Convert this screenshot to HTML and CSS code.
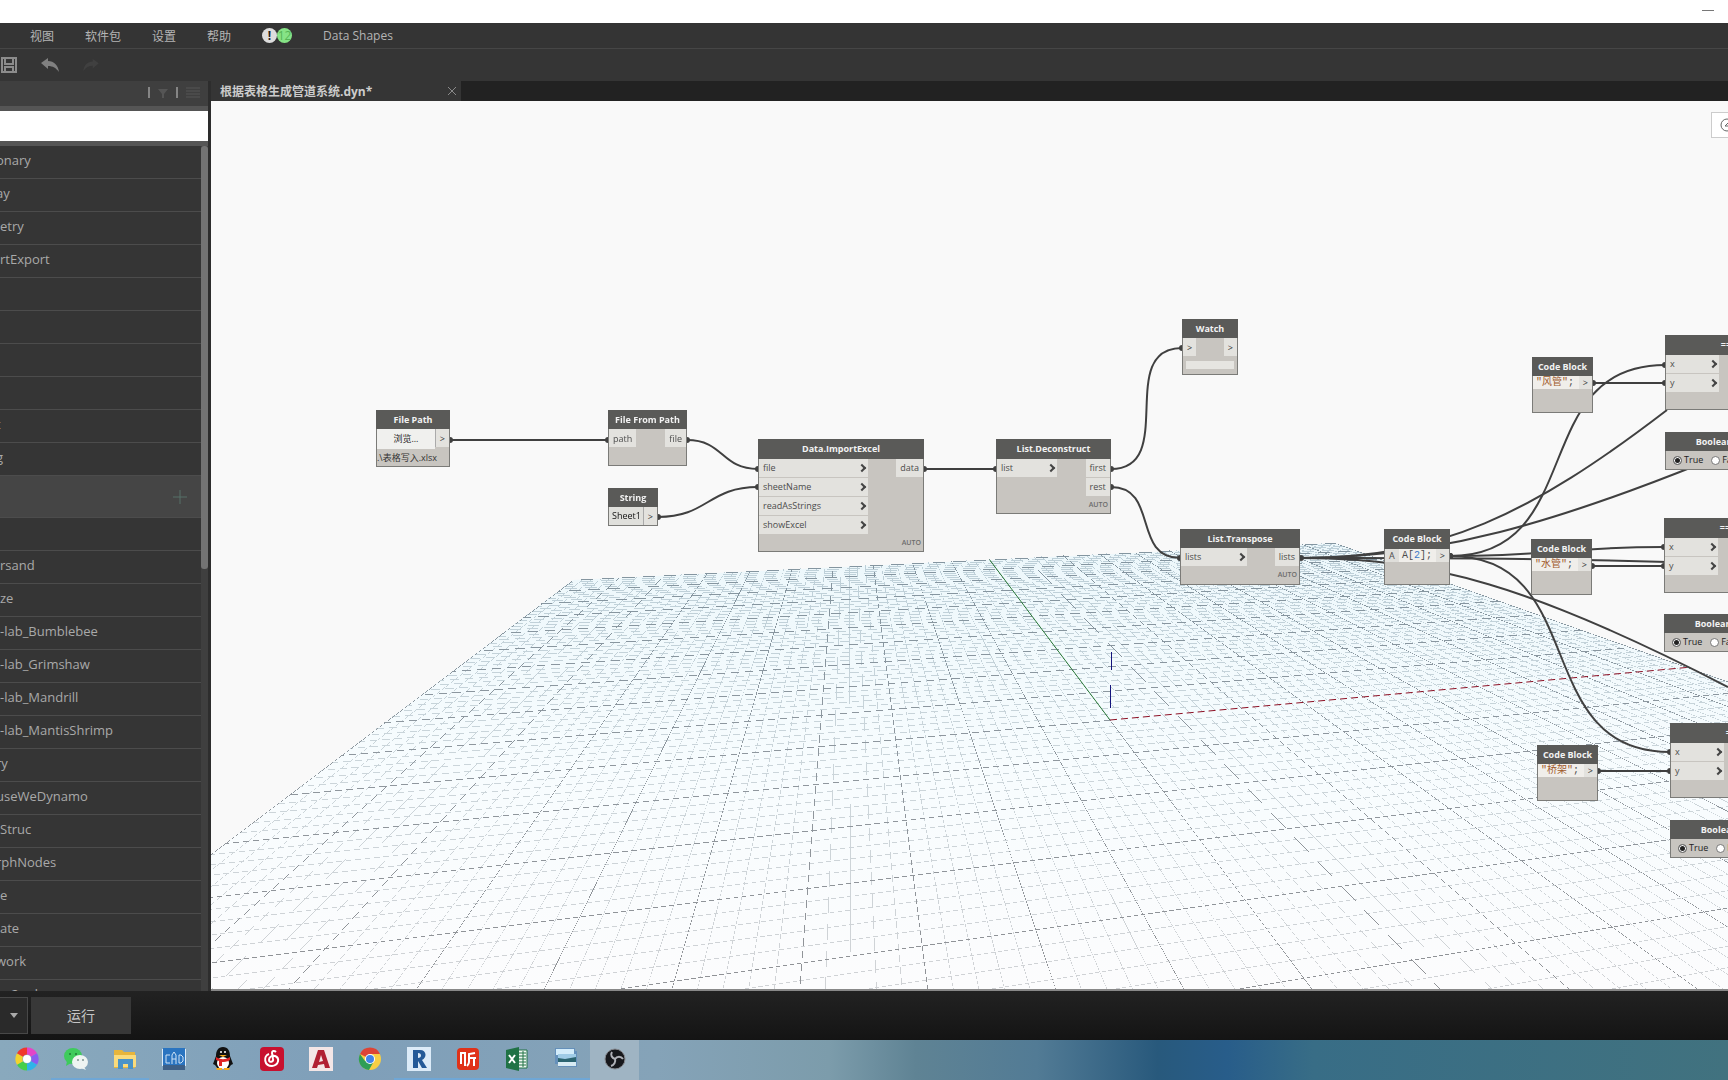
FILE: index.html
```html
<!DOCTYPE html>
<html lang="zh-CN">
<head>
    <meta charset="utf-8">
    <meta name="viewport" content="width=device-width, initial-scale=1.0">
    <title>Dynamo</title>
    <link rel="stylesheet" href="styles.css">
</head>
<body>
    <header class="titlebar">
        <button type="button" class="minimize" aria-label="最小化"></button>
    </header>

    <nav class="menubar">
        <a href="#">视图</a>
        <a href="#">软件包</a>
        <a href="#">设置</a>
        <a href="#">帮助</a>
        <span class="badges"><span class="badge warn">!</span><span class="badge count">12</span></span>
        <a href="#">Data Shapes</a>
    </nav>

    <div class="toolbar">
        <button type="button" class="tool" aria-label="保存">
            <svg width="16" height="16" viewBox="0 0 16 16"><path d="M1 1h14v14H1zM4 1v6h8V1M4 15v-5h8v5" fill="none" stroke="#8c8c8c" stroke-width="2"/></svg>
        </button>
        <button type="button" class="tool" aria-label="撤销">
            <svg width="18" height="14" viewBox="0 0 18 14"><path d="M0 5L7 0v3c6 0 10 4 11 11-3-4-6-6-11-6v3z" fill="#808080"/></svg>
        </button>
        <button type="button" class="tool" aria-label="重做">
            <svg width="16" height="12" viewBox="0 0 18 14"><path d="M18 5L11 0v3C5 3 1 7 0 14c3-4 6-6 11-6v3z" fill="#404040"/></svg>
        </button>
    </div>

    <div class="main">
        <aside class="library">
            <div class="library-head">
                <span class="bar"></span>
                <svg width="10" height="12" viewBox="0 0 10 12"><path d="M0 2h10L6 7v4H4V7z" fill="#555"/></svg>
                <span class="bar"></span>
                <svg width="14" height="12" viewBox="0 0 14 12"><path d="M0 1h14M0 4h14M0 7h14M0 10h14" stroke="#565656"/></svg>
            </div>
            <div class="search"><input type="text" aria-label="搜索"></div>
            <div class="library-body">
                <ul>
                    <li class="cut">onary</li>
                    <li class="cut">ay</li>
                    <li>etry</li>
                    <li>rtExport</li>
                    <li></li>
                    <li></li>
                    <li></li>
                    <li></li>
                    <li class="cut">t</li>
                    <li class="cut">g</li>
                    <li class="addons"><button type="button" aria-label="添加"><svg width="14" height="14" viewBox="0 0 14 14"><path d="M7 0v14M0 7h14" stroke="#567068"/></svg></button></li>
                    <li></li>
                    <li>rsand</li>
                    <li>ze</li>
                    <li>-lab_Bumblebee</li>
                    <li>-lab_Grimshaw</li>
                    <li>-lab_Mandrill</li>
                    <li>-lab_MantisShrimp</li>
                    <li class="cut">ry</li>
                    <li class="cut">useWeDynamo</li>
                    <li>Struc</li>
                    <li class="cut">rphNodes</li>
                    <li>e</li>
                    <li>ate</li>
                    <li class="cut">work</li>
                    <li>n 2 od</li>
                </ul>
                <div class="scroll"><div class="thumb"></div></div>
            </div>
        </aside>

        <section class="editor">
            <div class="tabs">
                <div class="tab">
                    <span>根据表格生成管道系统.dyn*</span>
                    <button type="button" aria-label="关闭"><svg width="8" height="8" viewBox="0 0 8 8"><path d="M0 0l8 8M8 0L0 8" stroke="#8a8a8a"/></svg></button>
                </div>
            </div>
            <div class="workspace" id="workspace">
                <canvas id="grid"></canvas>
                <svg class="wires">
                    <g id="wires"></g>
                </svg>

                <div class="node file-path">
                    <h3>File Path</h3>
                    <div class="row"><button type="button" class="browse">浏览...</button><span class="port out">&gt;</span></div>
                    <div class="path">.\表格写入.xlsx</div>
                </div>

                <div class="node from-path">
                    <h3>File From Path</h3>
                    <div class="row"><span class="port">path</span><span class="port">file</span></div>
                </div>

                <div class="node string">
                    <h3>String</h3>
                    <div class="row"><input type="text" value="Sheet1" aria-label="String"><span class="port out">&gt;</span></div>
                </div>

                <div class="node import-excel">
                    <h3>Data.ImportExcel</h3>
                    <div class="ports">
                        <div class="ins">
                            <span class="port list">file</span>
                            <span class="port list">sheetName</span>
                            <span class="port list">readAsStrings</span>
                            <span class="port list">showExcel</span>
                        </div>
                        <div class="outs"><span class="port">data</span></div>
                    </div>
                    <small>AUTO</small>
                </div>

                <div class="node deconstruct">
                    <h3>List.Deconstruct</h3>
                    <div class="ports">
                        <div class="ins"><span class="port list">list</span></div>
                        <div class="outs"><span class="port">first</span><span class="port">rest</span></div>
                    </div>
                    <small>AUTO</small>
                </div>

                <div class="node watch">
                    <h3>Watch</h3>
                    <div class="row"><span class="port out">&gt;</span><span class="port out">&gt;</span></div>
                    <div class="preview"></div>
                </div>

                <div class="node transpose">
                    <h3>List.Transpose</h3>
                    <div class="ports">
                        <div class="ins"><span class="port list">lists</span></div>
                        <div class="outs"><span class="port">lists</span></div>
                    </div>
                    <small>AUTO</small>
                </div>

                <div class="node code code-a">
                    <h3>Code Block</h3>
                    <div class="row"><span class="var">A</span><code>A[<i>2</i>];</code><span class="port out">&gt;</span></div>
                </div>
                <div class="node code code-duct">
                    <h3>Code Block</h3>
                    <div class="row"><code><b>"风管"</b>;</code><span class="port out">&gt;</span></div>
                </div>
                <div class="node code code-pipe">
                    <h3>Code Block</h3>
                    <div class="row"><code><b>"水管"</b>;</code><span class="port out">&gt;</span></div>
                </div>
                <div class="node code code-tray">
                    <h3>Code Block</h3>
                    <div class="row"><code><b>"桥架"</b>;</code><span class="port out">&gt;</span></div>
                </div>

                <div class="node equal equal-duct">
                    <h3>==</h3>
                    <div class="ins"><span class="port list">x</span><span class="port list">y</span></div>
                </div>
                <div class="node equal equal-pipe">
                    <h3>==</h3>
                    <div class="ins"><span class="port list">x</span><span class="port list">y</span></div>
                </div>
                <div class="node equal equal-tray">
                    <h3>==</h3>
                    <div class="ins"><span class="port list">x</span><span class="port list">y</span></div>
                </div>

                <div class="node boolean bool-duct">
                    <h3>Boolean</h3>
                    <div class="row"><label><input type="radio" name="b1" checked>True</label><label><input type="radio" name="b1">False</label></div>
                </div>
                <div class="node boolean bool-pipe">
                    <h3>Boolean</h3>
                    <div class="row"><label><input type="radio" name="b2" checked>True</label><label><input type="radio" name="b2">False</label></div>
                </div>
                <div class="node boolean bool-tray">
                    <h3>Boolean</h3>
                    <div class="row"><label><input type="radio" name="b3" checked>True</label><label><input type="radio" name="b3">False</label></div>
                </div>

                <button type="button" class="view-toggle" aria-label="切换视图">
                    <svg width="14" height="14" viewBox="0 0 14 14"><path d="M7 1a6 6 0 1 0 0 12a6 6 0 1 0 0-12M5 8l4-4v4z" fill="none" stroke="#666"/></svg>
                </button>
            </div>
        </section>
    </div>

    <footer class="runbar">
        <button type="button" class="mode" aria-label="运行模式"><svg width="8" height="5" viewBox="0 0 8 5"><path d="M0 0h8L4 5z" fill="#aaa"/></svg></button>
        <button type="button" class="run">运行</button>
    </footer>

    <div class="taskbar">
        <a href="#" class="app" aria-label="浏览器">
            <svg viewBox="0 0 24 24"><g fill="none" stroke-width="7"><path d="M12 4a8 8 0 0 1 7 4" stroke="#e445c8"/><path d="M19 8a8 8 0 0 1 0 8" stroke="#8a5cf0"/><path d="M19 16a8 8 0 0 1-7 4" stroke="#2fb4e8"/><path d="M12 20a8 8 0 0 1-7-4" stroke="#46cf4c"/><path d="M5 16a8 8 0 0 1 0-8" stroke="#f4d32c"/><path d="M5 8a8 8 0 0 1 7-4" stroke="#f0382c"/></g><circle cx="12" cy="12" r="4" fill="#fff"/></svg>
        </a>
        <a href="#" class="app open" aria-label="微信">
            <svg viewBox="0 0 24 24"><ellipse cx="9" cy="9" rx="9" ry="8" fill="#3ecb5c"/><path d="M3 14l-1 5 5-3z" fill="#3ecb5c"/><ellipse cx="16" cy="15" rx="8" ry="7" fill="#eef4f2"/><path d="M20 20l2 3-5-2z" fill="#eef4f2"/><g fill="#1c7a35"><circle cx="6" cy="7" r="1"/><circle cx="12" cy="7" r="1"/></g><g fill="#7e9490"><circle cx="14" cy="13" r="1"/><circle cx="19" cy="13" r="1"/></g></svg>
        </a>
        <a href="#" class="app open" aria-label="资源管理器">
            <svg viewBox="0 0 24 24"><path d="M1 3h8l2 2h11v16H1z" fill="#e7b53c"/><path d="M1 8h22v12H1z" fill="#fadb7c"/><path d="M5 12h15v10h-5v-5h-5v5H5z" fill="#4a93c8"/></svg>
        </a>
        <a href="#" class="app" aria-label="CAD">
            <svg viewBox="0 0 24 24"><path d="M1 1h22v22H1z" fill="#2a74c0"/><path d="M1 18h22v5H1z" fill="#3d5f86"/><path d="M0 2h1v17H0zM23 2h1v17h-1z" fill="#dcebf8"/><path d="M8 8H4v8h4M10 17V8l2-3 2 3v9M10 12h4M17 8h2l2 2v4l-2 2h-2z" fill="none" stroke="#cfe3f6" stroke-width="1"/></svg>
        </a>
        <a href="#" class="app" aria-label="QQ">
            <svg viewBox="0 0 24 24"><path d="M12 0c5 0 7 4 7 9l3 8-2 1-3 4H7l-3-4-2-1 3-8c0-5 2-9 7-9z" fill="#111"/><ellipse cx="12" cy="16" rx="6" ry="6" fill="#fff"/><circle cx="10" cy="5" r="1" fill="#fff"/><circle cx="14" cy="5" r="1" fill="#fff"/><path d="M8 8h8l-4 2z" fill="#f5a91c"/><path d="M5 10c5 3 9 3 14 0v3c-3 2-6 2-8 2v4H8v-5l-3-1z" fill="#e02425"/><path d="M5 21h6v2H6zM13 21h6l-1 2h-5z" fill="#f5a91c"/></svg>
        </a>
        <a href="#" class="app" aria-label="网易云音乐">
            <svg viewBox="0 0 24 24"><rect width="24" height="24" rx="4" fill="#c8102e"/><path d="M16 5c-2-2-4-1-4 1l1 6c1 3-4 4-4 1s3-5 6-4c5 2 4 9-3 10-8 0-9-10-3-12" fill="none" stroke="#fff" stroke-width="2"/></svg>
        </a>
        <a href="#" class="app" aria-label="AutoCAD">
            <svg viewBox="0 0 24 24"><path d="M0 0h24v24H0z" fill="#f3e6e6"/><path d="M3 21L9 3h6l6 18h-5l-1-4-6 1-1 3zM12 8l-2 7 4-1z" fill="#b02032" fill-rule="evenodd"/></svg>
        </a>
        <a href="#" class="app" aria-label="Chrome">
            <svg viewBox="0 0 24 24"><circle cx="12" cy="12" r="11" fill="#f7cf45"/><path d="M12 12L2 7A11 11 0 0 1 22 7H12z" fill="#dc4437"/><path d="M2 7a11 11 0 0 0 9 16l5-9-9 0z" fill="#2f9e56"/><circle cx="12" cy="12" r="5" fill="#fff"/><circle cx="12" cy="12" r="4" fill="#4384e8"/></svg>
        </a>
        <a href="#" class="app open" aria-label="Revit">
            <svg viewBox="0 0 24 24"><path d="M0 0h24v24H0z" fill="#dcebf8"/><path d="M6 3h7c7 0 7 8 2 10l5 8h-5l-4-7v7H6zm5 3v5c4 0 4-5 0-5z" fill="#245a98" fill-rule="evenodd"/></svg>
        </a>
        <a href="#" class="app open" aria-label="听">
            <svg viewBox="0 0 24 24"><rect x="1" y="1" width="22" height="22" rx="4" fill="#e03219"/><path d="M5 17V6h4v13M19 6l-6 1v8q0 2-2 4M13 11h7M18 11v8" fill="none" stroke="#fff" stroke-width="2"/></svg>
        </a>
        <a href="#" class="app open" aria-label="Excel">
            <svg viewBox="0 0 24 24"><path d="M12 3h10v18H12z" fill="#f2f8f4" stroke="#207245"/><path d="M14 6h7M14 9h7M14 12h7M14 15h7M14 18h7M18 4v16" stroke="#207245"/><path d="M1 3l13-3v24L1 21z" fill="#207245"/><path d="M4 8l6 8M10 8l-6 8" stroke="#fff" stroke-width="2"/></svg>
        </a>
        <a href="#" class="app open" aria-label="照片">
            <svg viewBox="0 0 24 24"><path d="M1 1h20v16H1zM4 4h19v16H4z" fill="#6590ba"/><path d="M2 2h18v6H2z" fill="#d3ecfa"/><path d="M4 7h18v12H4z" fill="#9fcbe6"/><path d="M4 11l7 1 11-2v5H4z" fill="#2c6470"/><path d="M4 15h18v4H4z" fill="#d8ebf3"/></svg>
        </a>
        <a href="#" class="app active" aria-label="OBS">
            <svg viewBox="0 0 24 24"><circle cx="12" cy="12" r="10" fill="#17181c" stroke="#85888e"/><g fill="none" stroke="#b0b2b8" stroke-width="2"><path d="M12 12c-3-1-5-4-3-7"/><path d="M12 12c2-3 6-3 8 0"/><path d="M12 12c1 3-1 6-4 7"/></g></svg>
        </a>
    </div>

    <script src="main.js"></script>
</body>
</html>
```
FILE: styles.css
```css
* { box-sizing: border-box; }

html, body { height: 100%; }

body {
    margin: 0;
    display: flex;
    flex-direction: column;
    overflow: hidden;
    background: #353535;
    color: #b4b4b4;
    font-family: "Open Sans", "Noto Sans CJK SC", sans-serif;
    font-size: 12px;
}

a { color: inherit; text-decoration: none; }

button {
    padding: 0;
    border: 0;
    background: none;
    color: inherit;
    font: inherit;
}

svg { display: block; }

/* top bars */
.titlebar {
    display: flex;
    flex: none;
    justify-content: flex-end;
    height: 23px;
    padding: 10px 14px 0 0;
    background: #fff;
}
.minimize { width: 12px; height: 1px; background: #777; }

.menubar {
    display: flex;
    flex: none;
    align-items: center;
    gap: 31px;
    height: 26px;
    padding-left: 30px;
    border-bottom: 1px solid #464646;
    background: #343434;
}
.badges { display: flex; }
.badge {
    width: 15px;
    height: 15px;
    border-radius: 50%;
    line-height: 15px;
    text-align: center;
}
.warn { background: #ddd; color: #222; font-weight: bold; }
.count { background: #86e386; color: #55b455; }

.toolbar {
    display: flex;
    flex: none;
    align-items: center;
    gap: 24px;
    height: 32px;
    padding-left: 1px;
    background: #353535;
}

.main { display: flex; flex: 1; min-height: 0; }

/* library */
.library {
    display: flex;
    flex-direction: column;
    flex: none;
    width: 211px;
    border-right: 3px solid #2d2d2d;
}
.library-head {
    display: flex;
    flex: none;
    align-items: center;
    justify-content: flex-end;
    gap: 8px;
    height: 25px;
    padding: 0 8px 2px 0;
    background: #3f3f3f;
}
.bar { width: 2px; height: 11px; background: #858585; }
.search { flex: none; border: solid #555; border-width: 5px 0; }
.search input {
    display: block;
    width: 100%;
    height: 30px;
    border: 0;
    background: #fff;
}
.library-body { display: flex; flex: 1; min-height: 0; overflow: hidden; }
.library ul {
    flex: 1;
    margin: 0;
    padding: 0;
    list-style: none;
    font-size: 13px;
    color: #a9a9a9;
}
.library li {
    height: 33px;
    border-bottom: 1px solid #4c4c4c;
    line-height: 28px;
    white-space: pre;
}
/* names that run off the left side */
.library .cut { text-indent: -4px; }
.library .addons {
    display: flex;
    align-items: center;
    justify-content: flex-end;
    height: 42px;
    padding-right: 14px;
    background: #454545;
}
.scroll { width: 7px; background: #3f3f3f; }
.thumb { height: 423px; background: #737373; border-radius: 3px; }

/* editor */
.editor { display: flex; flex: 1; flex-direction: column; min-width: 0; }
.tabs { display: flex; flex: none; height: 20px; background: #222; }
.tab {
    display: flex;
    align-items: center;
    justify-content: space-between;
    width: 250px;
    padding: 0 5px 1px 9px;
    background: #353535;
    color: #ccc;
    font-weight: bold;
}
.workspace {
    position: relative;
    flex: 1;
    overflow: hidden;
    border-bottom: 2px solid #888;
    background: #f9f9f9;
}
#grid, .wires { position: absolute; top: 0; left: 0; width: 100%; height: 100%; }
#wires { fill: none; stroke: #404040; stroke-width: 2; }
#wires circle { fill: #404040; stroke: none; }

/* nodes */
.node {
    position: absolute;
    display: flex;
    flex-direction: column;
    border: 1px solid #7b7b78;
    background: #c8c5c0;
    color: #4c4c4c;
    font-size: 9px;
    line-height: 18px;
    white-space: nowrap;
}
.node h3 {
    flex: none;
    margin: -1px -1px 0;
    background: #5a5a58;
    color: #f2f2f2;
    font-size: 9px;
    line-height: 19px;
    text-align: center;
}
.row, .ports { display: flex; justify-content: space-between; }
.port { display: block; padding: 0 4px; height: 18px; background: #e3e2de; }
.row .port, .row .browse { line-height: 20px; }
.port.out { color: #333; }
.ins, .outs { display: grid; gap: 1px; align-content: start; }
.list { display: flex; justify-content: space-between; padding-right: 3px; }
.list::after {
    width: 4px;
    height: 4px;
    margin: 6px 0 0;
    border: solid #444;
    border-width: 2px 2px 0 0;
    transform: rotate(45deg);
    content: "";
}
.node small {
    margin-top: auto;
    padding-right: 2px;
    color: #6c6c6c;
    font-size: 7px;
    font-weight: 600;
    text-align: right;
}

.file-path { left: 165px; top: 309px; width: 74px; height: 57px; }
.browse { flex: 1; background: #f0f0ee; color: #222; }
.file-path .out, .string .out { border-left: 1px solid #aaa; }
.path { color: #333; }

.from-path { left: 397px; top: 309px; width: 79px; height: 56px; }

.string { left: 397px; top: 387px; width: 50px; height: 38px; }
.string input {
    flex: 1;
    min-width: 0;
    height: 18px;
    padding: 0 3px;
    border: 0;
    background: #e0e0dc;
    color: #111;
    font: inherit;
}

.import-excel { left: 547px; top: 338px; width: 166px; height: 113px; }
.import-excel .ins { width: 109px; }
.deconstruct { left: 785px; top: 338px; width: 115px; height: 75px; }
.deconstruct .ins { width: 60px; }
.import-excel h3, .deconstruct h3, .equal h3 { line-height: 20px; }

.watch { left: 971px; top: 218px; width: 56px; height: 56px; }
.preview { margin: 5px 3px; height: 11px; background: #e6e5e1; }

.transpose { left: 969px; top: 428px; width: 120px; height: 56px; }
.transpose .ins { width: 66px; }

.code { width: 61px; height: 56px; }
.code .row, .code .port { height: 13px; line-height: 13px; }
.code .row { background: #f0eeea; }
.code code {
    flex: 1;
    padding-left: 3px;
    font-family: "Liberation Mono", "Noto Sans CJK SC", monospace;
    font-size: 10px;
}
.code b { color: #a05a2c; font-weight: normal; }
.code i { color: #3b78c9; font-style: normal; }
.code .var { width: 14px; padding-left: 4px; background: #dfdeda; }
.code-a { left: 1173px; top: 428px; width: 66px; }
.code-a h3 { line-height: 20px; }
.code-duct { left: 1321px; top: 256px; }
.code-pipe { left: 1320px; top: 438px; }
.code-tray { left: 1326px; top: 644px; }

.equal { width: 122px; height: 75px; }
.equal .ins { width: 53px; }
.equal-duct { left: 1454px; top: 234px; }
.equal-pipe { left: 1453px; top: 417px; }
.equal-tray { left: 1459px; top: 622px; }

.boolean { width: 98px; height: 38px; color: #222; }
.boolean .row { justify-content: flex-start; gap: 8px; padding-left: 7px; }
.boolean label { display: flex; align-items: center; gap: 2px; }
.boolean input {
    appearance: none;
    width: 9px;
    height: 9px;
    margin: 0;
    border: 1px solid #777;
    border-radius: 50%;
    background: #fff;
}
.boolean input:checked { background: #222; box-shadow: inset 0 0 0 1px #fff; }
.bool-duct { left: 1454px; top: 331px; }
.bool-pipe { left: 1453px; top: 513px; }
.bool-tray { left: 1459px; top: 719px; }

.view-toggle {
    position: absolute;
    top: 11px;
    right: -20px;
    width: 37px;
    height: 26px;
    padding-left: 8px;
    border: 1px solid #ccc;
    background: #fff;
}

/* bottom bars */
.runbar {
    display: flex;
    flex: none;
    gap: 3px;
    height: 49px;
    padding: 6px 0;
    background: linear-gradient(#222, #141414);
}
.mode {
    display: flex;
    align-items: center;
    justify-content: flex-end;
    width: 28px;
    padding-right: 9px;
    border: 1px solid #484848;
    border-left: 0;
    background: #2a2a2a;
}
.run { width: 100px; padding-bottom: 2px; background: #383838; color: #c4c4c4; font-size: 14px; }

.taskbar {
    display: flex;
    flex: none;
    height: 40px;
    padding-left: 2px;
    background: linear-gradient(90deg, #89a9bd 0%, #7f9fb9 20%, #85a3b8 38%, #7c9cab 48%, #5f8394 53%, #527b95 60%, #28597c 67%, #285d8a 71%, #386d86 76%, #41727f 100%);
}
.app {
    display: flex;
    align-items: center;
    justify-content: center;
    width: 49px;
    border-bottom: 2px solid transparent;
}
.app svg { width: 24px; height: 24px; }
.open { border-color: #6fa7d6; }
.active { background: #9fb4c3; }
```
FILE: main.js
```js
const workspace = document.getElementById("workspace");
const grid = document.getElementById("grid");

// ground plane -> screen, u and v run from -1 to 1
function project(u, v) {
    const w = 1 + 0.1743 * u + 0.8508 * v;
    return {
        x: (871 * u + 721.7 * v + 1110) / w - 211,
        y: (63.8 * u + 316.1 * v + 720) / w - 101
    };
}

// only the pixels close to a pixel row (or column) are filled, which gives the broken look
function gridLine(ctx, a, b, color) {
    const dx = b.x - a.x;
    const dy = b.y - a.y;
    ctx.fillStyle = color;
    if (Math.abs(dx) > Math.abs(dy)) {
        const from = Math.max(0, Math.floor(Math.min(a.x, b.x)));
        const to = Math.min(grid.width, Math.max(a.x, b.x));
        for (let x = from; x < to; x++) {
            const y = a.y + (x - a.x) * dy / dx;
            if (y - Math.floor(y) < 0.6) ctx.fillRect(x, Math.floor(y), 1, 1);
        }
    } else {
        const from = Math.max(0, Math.floor(Math.min(a.y, b.y)));
        const to = Math.min(grid.height, Math.max(a.y, b.y));
        for (let y = from; y < to; y++) {
            const x = a.x + (y - a.y) * dx / dy;
            if (x - Math.floor(x) < 0.6) ctx.fillRect(Math.floor(x), y, 1, 1);
        }
    }
}

function verticalFade(ctx, far, middle, near) {
    const fade = ctx.createLinearGradient(0, 440, 0, 890);
    fade.addColorStop(0, far);
    fade.addColorStop(0.5, middle);
    fade.addColorStop(1, near);
    return fade;
}

function line(ctx, a, b, color) {
    ctx.strokeStyle = color;
    ctx.beginPath();
    ctx.moveTo(a.x, a.y);
    ctx.lineTo(b.x, b.y);
    ctx.stroke();
}

function drawGrid() {
    grid.width = workspace.clientWidth;
    grid.height = workspace.clientHeight;
    const ctx = grid.getContext("2d");
    const near = -0.7;

    ctx.fillStyle = verticalFade(ctx, "#ecf7fb", "#f7fcfe", "#fcfcfd");
    ctx.beginPath();
    for (const [u, v] of [[-1, 1], [1, 1], [1, near], [-1, near]]) {
        const p = project(u, v);
        ctx.lineTo(p.x, p.y);
    }
    ctx.fill();

    const minorColor = verticalFade(ctx, "#bccfd8", "#cbd5da", "#d0d2d5");
    const majorColor = verticalFade(ctx, "#8395a0", "#8f979e", "#909296");
    for (const major of [false, true]) {
        const color = major ? majorColor : minorColor;
        for (let i = -50; i <= 50; i++) {
            if ((i % 5 === 0) !== major) continue;
            const t = i / 50;
            gridLine(ctx, project(t, near), project(t, 1), color);
            if (t >= near) gridLine(ctx, project(-1, t), project(i === 0 ? 0 : 1, t), color);
        }
    }

    // axes
    const origin = project(0, 0);
    line(ctx, origin, project(0, 1), "#2e7d3c");
    ctx.setLineDash([7, 4]);
    line(ctx, origin, project(1, 0), "#8c1024");
    ctx.setLineDash([]);
    ctx.fillStyle = "#14147c";
    ctx.fillRect(Math.round(origin.x), Math.round(origin.y) - 35, 1, 23);
    ctx.fillRect(Math.round(origin.x) + 1, Math.round(origin.y) - 68, 1, 18);
}

// connectors: x1, y1, x2, y2
const links = [
    [239, 339, 397, 339],
    [476, 339, 547, 368],
    [447, 416, 547, 386],
    [713, 368, 785, 368],
    [900, 368, 971, 247],
    [900, 386, 969, 457],
    [1239, 455, 1454, 264],
    [1239, 455, 1453, 446],
    [1239, 455, 1459, 651],
    [1382, 282, 1454, 282],
    [1381, 465, 1453, 465],
    [1387, 670, 1459, 670]
];
const open = [
    "M1089 457C1229 457 1319 414 1456 309",
    "M1089 457C1229 457 1349 419 1489 363",
    "M1089 457C1229 457 1349 457 1529 463",
    "M1089 457C1219 457 1319 484 1517 586"
];

function drawWires() {
    let out = `<circle cx="1090" cy="457" r="3"/>`;
    for (const [x1, y1, x2, y2] of links) {
        const bend = Math.round(Math.hypot(x2 - x1, y2 - y1) * 0.48);
        out += `<path d="M${x1} ${y1}C${x1 + bend} ${y1} ${x2 - bend} ${y2} ${x2} ${y2}"/>`;
        out += `<circle cx="${x1}" cy="${y1}" r="3"/><circle cx="${x2}" cy="${y2}" r="3"/>`;
    }
    for (const d of open) out += `<path d="${d}"/>`;
    document.getElementById("wires").innerHTML = out;
}

drawGrid();
drawWires();
window.addEventListener("resize", drawGrid);
```
